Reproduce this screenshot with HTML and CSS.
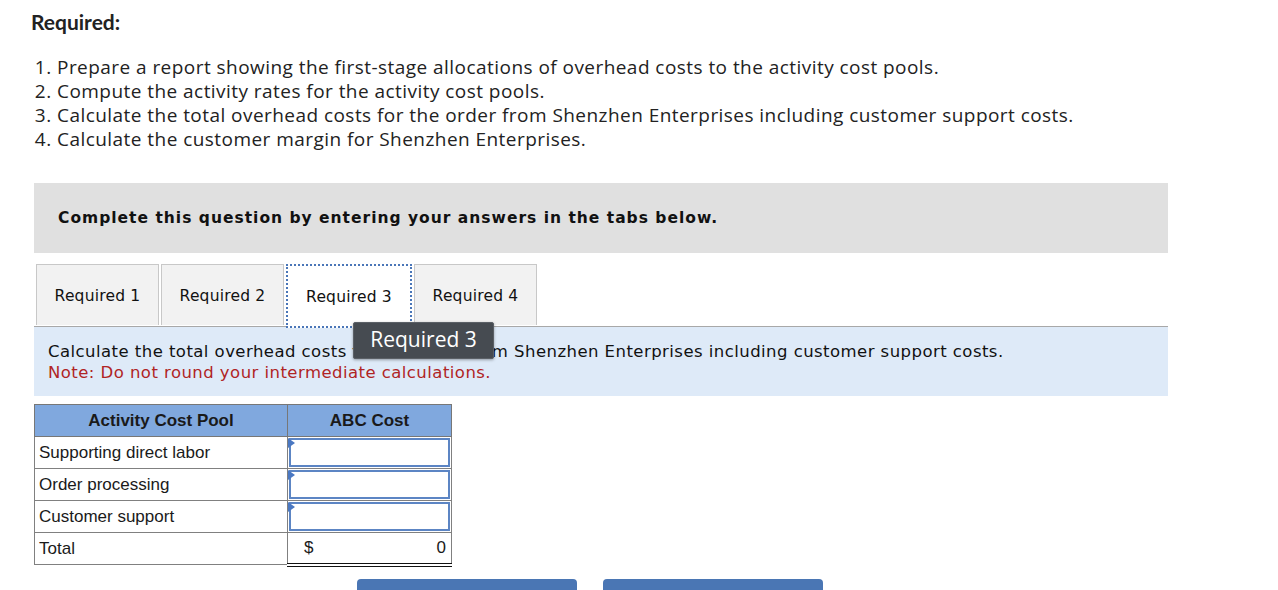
FILE: index.html
```html
<!DOCTYPE html>
<html>
<head>
<meta charset="utf-8">
<link rel="stylesheet" href="styles.css">
</head>
<body>
<div class="page">
  <div class="intro">
    <h2 class="req-title">Required:</h2>
    <ol class="req-list">
      <li>Prepare a report showing the first-stage allocations of overhead costs to the activity cost pools.</li>
      <li>Compute the activity rates for the activity cost pools.</li>
      <li>Calculate the total overhead costs for the order from Shenzhen Enterprises including customer support costs.</li>
      <li>Calculate the customer margin for Shenzhen Enterprises.</li>
    </ol>
  </div>

  <div class="instruct">Complete this question by entering your answers in the tabs below.</div>

  <div class="tabs-wrap">
    <div class="tabs">
      <div class="tab">Required 1</div>
      <div class="tab">Required 2</div>
      <div class="tab active">Required 3</div>
      <div class="tab">Required 4</div>
    </div>
    <div class="panel">
      <div class="panel-text">Calculate the total overhead costs for the order from Shenzhen Enterprises including customer support costs.</div>
      <div class="panel-note">Note: Do not round your intermediate calculations.</div>
    </div>
    <div class="tooltip">Required 3</div>
  </div>

  <table class="abc">
    <thead>
      <tr><th class="c1">Activity Cost Pool</th><th class="c2">ABC Cost</th></tr>
    </thead>
    <tbody>
      <tr><td class="c1">Supporting direct labor</td><td class="inp"><div class="box"></div></td></tr>
      <tr><td class="c1">Order processing</td><td class="inp"><div class="box"></div></td></tr>
      <tr><td class="c1">Customer support</td><td class="inp"><div class="box"></div></td></tr>
      <tr class="total"><td class="c1">Total</td><td class="tot"><span class="dollar">$</span><span class="num">0</span></td></tr>
    </tbody>
  </table>

  <div class="buttons">
    <div class="btn"></div>
    <div class="btn"></div>
  </div>
</div>
</body>
</html>
```

FILE: styles.css
```css
html, body {
  margin: 0;
  padding: 0;
  background: #ffffff;
}
body {
  width: 1278px;
  height: 590px;
  overflow: hidden;
  color: #1a1a1a;
  font-family: "Open Sans", "Lato", sans-serif;
}
.page {
  padding-top: 10px;
}
.intro {
  padding-left: 31px;
}
.req-title {
  margin: 0;
  font-family: "Lato", sans-serif;
  font-size: 21px;
  font-weight: 700;
  line-height: 24px;
  color: #222;
}
.req-list {
  margin: 21px 0 0 0;
  padding-left: 26px;
  font-size: 19px;
  letter-spacing: 0.45px;
  line-height: 24px;
  color: #222;
}
.instruct {
  margin: 32px 0 0 34px;
  width: 1110px;
  height: 70px;
  padding-left: 24px;
  background: #e0e0e0;
  display: flex;
  align-items: center;
  font-family: "DejaVu Sans", Verdana, sans-serif;
  font-weight: 700;
  font-size: 15.5px;
  letter-spacing: 1px;
  color: #111;
}
.tabs-wrap {
  position: relative;
  margin: 11px 0 0 34px;
  width: 1134px;
}
.tabs {
  display: flex;
  padding-left: 2px;
  gap: 2px;
}
.tab {
  height: 61px;
  box-sizing: border-box;
  border: 1px solid #c8c8c8;
  border-bottom: none;
  background: #f2f2f2;
  font-family: "DejaVu Sans", Verdana, sans-serif;
  font-size: 15.5px;
  letter-spacing: 0.2px;
  color: #111;
  display: flex;
  align-items: center;
  justify-content: center;
  width: 123px;
  padding-top: 2px;
}
.tab.active {
  background: #ffffff;
  border: 2px dotted #4a76b8;
  width: 126px;
  height: 64px;
  margin-bottom: -2px;
  position: relative;
  z-index: 1;
}
.panel {
  border-top: 1px solid #a8a8a8;
  background: #deeaf8;
  height: 70px;
  box-sizing: border-box;
  padding: 14px 14px 0 14px;
  font-family: "DejaVu Sans", Verdana, sans-serif;
  font-size: 16.5px;
  letter-spacing: 0.45px;
  line-height: 21px;
}
.panel-text {
  color: #111;
}
.panel-note {
  color: #b02424;
}
.tooltip {
  position: absolute;
  left: 319px;
  top: 58px;
  width: 141px;
  height: 37px;
  box-sizing: border-box;
  background: #464b51;
  color: #ffffff;
  border: 1px solid #5b6066;
  border-radius: 2px;
  box-shadow: 0 1px 3px rgba(0,0,0,0.35);
  font-family: "Open Sans", "Lato", sans-serif;
  font-size: 21px;
  display: flex;
  align-items: center;
  justify-content: center;
  z-index: 5;
  padding-bottom: 3px;
}
.abc {
  margin: 8px 0 0 34px;
  border-collapse: collapse;
  font-family: "Liberation Sans", Arial, sans-serif;
  font-size: 17px;
  color: #1a1a1a;
}
.abc tr {
  height: 32px;
}
.abc th {
  background: #80a8de;
  border: 1px solid #777;
  padding: 0;
  font-weight: 700;
  font-size: 17px;
  color: #1a1a1a;
}
.abc th.c1 {
  width: 252px;
}
.abc th.c2 {
  width: 163px;
}
.abc td {
  border: 1px solid #808080;
  padding: 0;
}
.abc td.c1 {
  padding-left: 4px;
  text-align: left;
}
.abc td.inp {
  padding: 1px;
  vertical-align: top;
}
.box {
  height: 29px;
  border: 2px solid #5c85c4;
  box-sizing: border-box;
  background: #ffffff;
  position: relative;
}
.box::before {
  content: "";
  position: absolute;
  left: -3px;
  top: -2px;
  width: 0;
  height: 0;
  border-top: 5px solid transparent;
  border-bottom: 5px solid transparent;
  border-left: 7px solid #4a78c2;
}
.abc td.tot {
  border-bottom: 4px double #111;
  padding: 0 5px 0 16px;
}
.dollar {
  float: left;
}
.num {
  float: right;
}
.buttons {
  display: flex;
  gap: 26px;
  margin: 12px 0 0 357px;
}
.btn {
  width: 220px;
  height: 20px;
  background: #4a76b4;
  border-radius: 4px 4px 0 0;
}
```
